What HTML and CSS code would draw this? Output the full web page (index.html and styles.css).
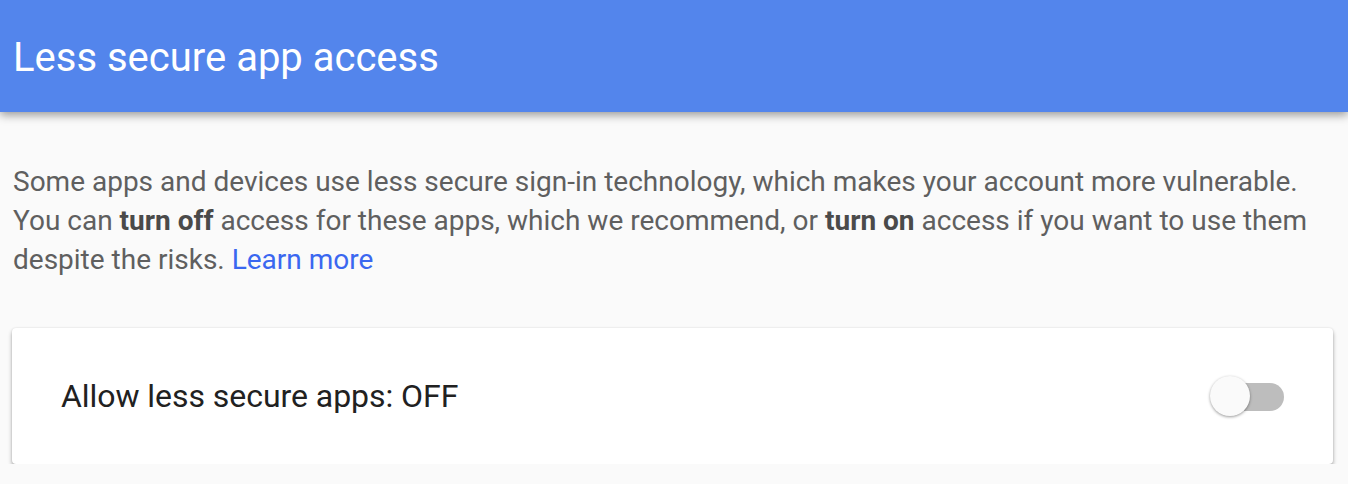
FILE: index.html
```html
<!DOCTYPE html>
<html>
<head>
<meta charset="utf-8">
<link rel="stylesheet" href="styles.css">
</head>
<body>
<header class="appbar">
  <h1 class="title">Less secure app access</h1>
</header>
<main class="content">
  <p class="intro">Some apps and devices use less secure sign-in technology, which makes your account more vulnerable. You can <b>turn off</b> access for these apps, which we recommend, or <b>turn on</b> access if you want to use them despite the risks. <a class="link" href="#">Learn more</a></p>
  <section class="card">
    <span class="card-label">Allow less secure apps: OFF</span>
    <span class="toggle"><span class="track"></span><span class="knob"></span></span>
  </section>
</main>
</body>
</html>
```
FILE: styles.css
```css
html, body {
  margin: 0;
  padding: 0;
  background: #fafafa;
  font-family: Roboto, "Liberation Sans", sans-serif;
}
.appbar {
  height: 112px;
  box-sizing: border-box;
  background: #5385ec;
  box-shadow: 0 3px 9px rgba(0,0,0,0.4);
  display: flex;
  align-items: center;
  padding: 3px 13px 0;
  position: relative;
  z-index: 1;
}
.title {
  margin: 0;
  color: #fff;
  font-weight: 400;
  font-size: 40px;
  line-height: 48px;
}
.content {
  padding: 50px 15px 0 13px;
}
.intro {
  margin: 0;
  color: #5f5f5f;
  font-size: 28px;
  line-height: 39px;
}
.intro b { font-weight: 700; color: #4a4a4a; }
.link { color: #3a67f0; text-decoration: none; }
.card {
  margin: 49px 0 0 -1px;
  background: #fff;
  border-radius: 4px;
  box-shadow: 0 3px 4px rgba(0,0,0,0.32), 0 0 2px rgba(0,0,0,0.12);
  height: 136px;
  display: flex;
  align-items: center;
  justify-content: space-between;
  padding: 0 49px;
}
.card-label {
  color: #212121;
  font-size: 32px;
  letter-spacing: -0.05px;
}
.toggle {
  position: relative;
  width: 74px;
  height: 41px;
  display: inline-block;
}
.track {
  position: absolute;
  left: 6px;
  top: 7px;
  width: 68px;
  height: 28px;
  border-radius: 14px;
  background: #bdbdbd;
}
.knob {
  position: absolute;
  left: 0;
  top: 0;
  width: 40px;
  height: 40px;
  border-radius: 50%;
  background: #fafafa;
  box-shadow: 0 1px 3px rgba(0,0,0,0.4);
}
```
